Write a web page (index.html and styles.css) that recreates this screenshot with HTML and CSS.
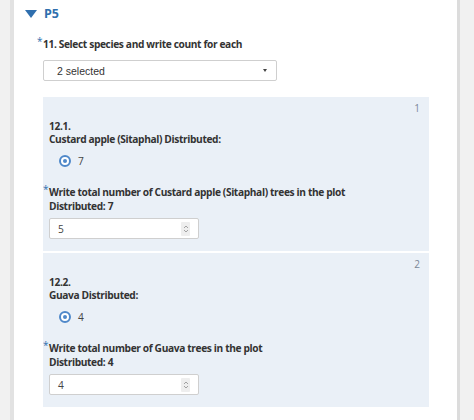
FILE: index.html
```html
<!DOCTYPE html>
<html>
<head>
<meta charset="utf-8">
<link rel="stylesheet" href="styles.css">
</head>
<body>
<div class="page">
  <div class="header">
    <span class="caret-down"></span>
    <span class="title">P5</span>
  </div>
  <div class="content">
    <div class="question"><span class="req">*</span>11. Select species and write count for each</div>
    <div class="select">
      <span>2 selected</span>
      <span class="select-caret"></span>
    </div>

    <div class="group">
      <div class="num">1</div>
      <div class="sub-title">12.1.<br>Custard apple (Sitaphal) Distributed:</div>
      <div class="radio-row"><span class="radio"></span><span class="radio-val">7</span></div>
      <div class="label"><span class="req">*</span>Write total number of Custard apple (Sitaphal) trees in the plot<br>Distributed: 7</div>
      <div class="input">
        <span>5</span>
        <span class="spin"><svg width="6" height="10" viewBox="0 0 6 10"><path d="M1 4 L3 2 L5 4 M1 6 L3 8 L5 6" fill="none" stroke="#999" stroke-width="0.9"/></svg></span>
      </div>
    </div>

    <div class="group">
      <div class="num">2</div>
      <div class="sub-title">12.2.<br>Guava Distributed:</div>
      <div class="radio-row"><span class="radio"></span><span class="radio-val">4</span></div>
      <div class="label"><span class="req">*</span>Write total number of Guava trees in the plot<br>Distributed: 4</div>
      <div class="input">
        <span>4</span>
        <span class="spin"><svg width="6" height="10" viewBox="0 0 6 10"><path d="M1 4 L3 2 L5 4 M1 6 L3 8 L5 6" fill="none" stroke="#999" stroke-width="0.9"/></svg></span>
      </div>
    </div>
  </div>
</div>
</body>
</html>
```

FILE: styles.css
```css
html, body {
  margin: 0;
  padding: 0;
}
body {
  background: #f1f1f1;
  font-family: "Open Sans", "Noto Sans", sans-serif;
  color: #333;
  height: 420px;
  overflow: hidden;
}
.page {
  margin-left: 10px;
  width: 443px;
  border-left: 4px solid #e2e2e2;
  border-right: 3px solid #dcdcdc;
  background: #fff;
  min-height: 420px;
}
.header {
  display: flex;
  align-items: center;
  padding: 4px 0 0 11px;
  height: 20px;
}
.caret-down {
  width: 0;
  height: 0;
  border-left: 6px solid transparent;
  border-right: 6px solid transparent;
  border-top: 8px solid #2f6fae;
  margin-right: 7px;
}
.title {
  font-weight: 700;
  font-size: 12.5px;
  color: #2f6fae;
  line-height: 20px;
}
.content {
  padding: 0 28px 0 29px;
}
.question {
  position: relative;
  margin-top: 13px;
  font-weight: 700;
  font-size: 10.2px;
  letter-spacing: -0.37px;
  line-height: 14px;
  color: #333;
}
.req {
  position: absolute;
  left: -6px;
  top: -3px;
  color: #2f6fae;
  font-size: 10px;
  font-weight: 400;
  letter-spacing: 0;
}
.select {
  margin-top: 9px;
  width: 234px;
  height: 21px;
  box-sizing: border-box;
  border: 1px solid #cfcfcf;
  border-radius: 2px;
  display: flex;
  align-items: center;
  justify-content: space-between;
  padding: 0 9px 0 13px;
  font-family: "Liberation Sans", Arial, sans-serif;
  font-size: 10.5px;
  color: #333;
}
.select-caret {
  width: 0;
  height: 0;
  border-left: 2.5px solid transparent;
  border-right: 2.5px solid transparent;
  border-top: 3px solid #444;
}
.group {
  margin-top: 16px;
  background: #eaf0f7;
  padding: 4px 6px 12px 6px;
  position: relative;
}
.group + .group {
  margin-top: 2px;
}
.num {
  text-align: right;
  font-size: 10px;
  line-height: 14px;
  color: #7b8797;
  padding-right: 3px;
}
.sub-title {
  margin-top: 5px;
  font-weight: 700;
  font-size: 10.2px;
  letter-spacing: -0.37px;
  line-height: 13px;
}
.radio-row {
  margin-top: 8px;
  display: flex;
  align-items: center;
  height: 14px;
  padding-left: 10px;
}
.radio {
  width: 12px;
  height: 12px;
  box-sizing: border-box;
  border-radius: 50%;
  border: 2px solid #4f88c9;
  background: #fff;
  display: flex;
  align-items: center;
  justify-content: center;
}
.radio::after {
  content: "";
  width: 4px;
  height: 4px;
  border-radius: 50%;
  background: #4f88c9;
}
.radio-val {
  margin-left: 7px;
  font-size: 10.2px;
  color: #444;
}
.label {
  position: relative;
  margin-top: 17px;
  font-weight: 700;
  font-size: 10.2px;
  letter-spacing: -0.37px;
  line-height: 14px;
}
.input {
  margin-top: 5px;
  width: 150px;
  height: 21px;
  box-sizing: border-box;
  border: 1px solid #cfcfcf;
  border-radius: 2px;
  background: #fff;
  display: flex;
  align-items: center;
  justify-content: space-between;
  padding: 0 8px 0 8px;
  font-size: 10.2px;
  color: #444;
}
.spin {
  width: 9px;
  height: 14px;
  background: #eeeeee;
  border-radius: 1px;
  display: flex;
  align-items: center;
  justify-content: center;
}
```
